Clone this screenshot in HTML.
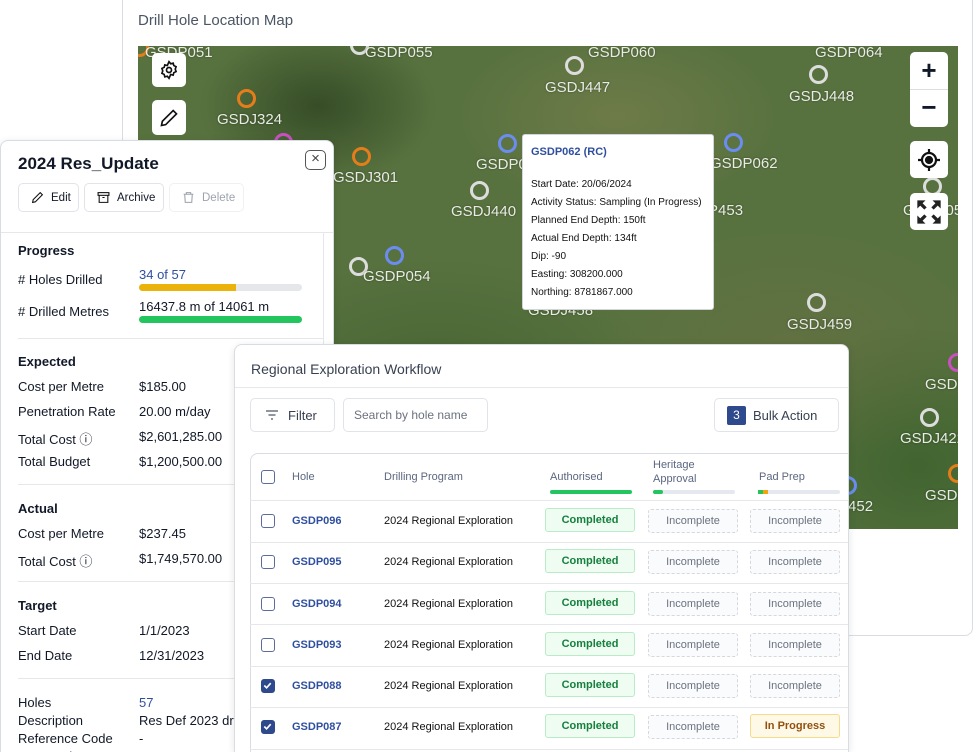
<!DOCTYPE html>
<html style="width:974px;height:752px;overflow:hidden"><head><meta charset="utf-8"><style>
*{box-sizing:border-box;margin:0;padding:0}
body{width:974px;height:752px;overflow:hidden;background:#fff;font-family:"Liberation Sans",sans-serif;position:relative;color:#111827}
.a{position:absolute}
.map{left:138px;top:46px;width:820px;height:483px;overflow:hidden;
background:
radial-gradient(ellipse 120px 80px at 180px 60px,rgba(20,40,15,.5),transparent),
radial-gradient(ellipse 160px 90px at 480px 70px,rgba(150,140,90,.35),transparent),
radial-gradient(ellipse 200px 120px at 650px 300px,rgba(120,110,70,.3),transparent),
radial-gradient(ellipse 180px 140px at 780px 420px,rgba(30,80,25,.4),transparent),
radial-gradient(ellipse 220px 120px at 300px 330px,rgba(40,80,30,.35),transparent),
#58723f}
.mk{position:absolute;width:19px;height:19px;border-radius:50%;border:3px solid #ddd}
.lb{position:absolute;color:#e8ece4;font-size:15px;white-space:nowrap;text-shadow:0 0 2px rgba(0,0,0,.4)}
.ctl{position:absolute;background:#fff;border-radius:5px;display:flex;align-items:center;justify-content:center}
.tip{left:522px;top:134px;width:192px;height:176px;background:#fff;border:1px solid #d1d5db;border-radius:3px;font-size:10px;color:#111}
.tip div{position:absolute;left:8px;white-space:nowrap}
.lp{left:0;top:140px;width:334px;height:612px;background:#fff;border:1px solid #d8dce3;border-bottom:none;border-radius:8px 8px 0 0;box-shadow:0 2px 8px rgba(0,0,0,.12);overflow:hidden}
.lp .t{position:absolute;font-size:13px;white-space:nowrap}
.lp .h{font-weight:bold}
.hr{position:absolute;height:1px;background:#e5e7eb}
.btn{position:absolute;border:1px solid #e0e3e8;border-radius:5px;font-size:11.5px;display:flex;align-items:center;gap:7px;padding-left:12px;background:#fff}
.wp{left:234px;top:344px;width:615px;height:408px;background:#fff;border:1px solid #d8dce3;border-bottom:none;border-radius:8px 8px 0 0;box-shadow:0 2px 8px rgba(0,0,0,.1);overflow:hidden}
.row{position:absolute;left:250px;width:598px;height:1px;background:#e5e7eb}
.cb{position:absolute;left:261px;width:14px;height:14px;border:1.5px solid #5b6b9a;border-radius:3px;background:#fff}
.cb.on{background:#2e4a8c;border-color:#2e4a8c}
.hole{position:absolute;left:292px;font-size:11px;color:#2f4f9e;font-weight:bold}
.prog{position:absolute;left:384px;font-size:11px;color:#111}
.pill{position:absolute;width:90px;height:24px;border-radius:3px;font-size:11px;display:flex;align-items:center;justify-content:center}
.c{left:545px;background:#effcf2;border:1.5px solid #b9ebc6;color:#15803d;font-weight:bold}
.i{border:1.5px dashed #d5d8de;color:#6b7280;background:#fafbfc}
.p{left:750px;background:#fef9e6;border:1.5px solid #f5dc8a;color:#92500e;font-weight:bold}
.th{position:absolute;font-size:11px;color:#5b6680}
</style></head><body>
<div class="a" style="left:122px;top:-10px;width:851px;height:646px;border:1px solid #d8dce3;border-radius:8px"></div>
<div class="a" style="left:138px;top:12px;font-size:15px;color:#4b5563">Drill Hole Location Map</div>
<div class="a map">
 <div class="mk" style="left:-8px;top:-8px;border-color:#e57d1b"></div><div class="lb" style="left:7px;top:-2px">GSDP051</div>
 <div class="mk" style="left:212px;top:-10px"></div><div class="lb" style="left:227px;top:-2px">GSDP055</div>
 <div class="mk" style="left:427px;top:10px"></div><div class="lb" style="left:450px;top:-2px">GSDP060</div><div class="lb" style="left:407px;top:33px">GSDJ447</div>
 <div class="mk" style="left:671px;top:19px"></div><div class="lb" style="left:677px;top:-2px">GSDP064</div><div class="lb" style="left:651px;top:42px">GSDJ448</div>
 <div class="mk" style="left:99px;top:43px;border-color:#e57d1b"></div><div class="lb" style="left:79px;top:65px">GSDJ324</div>
 <div class="mk" style="left:136px;top:87px;border-color:#c850c0"></div>
 <div class="mk" style="left:214px;top:101px;border-color:#e57d1b"></div><div class="lb" style="left:195px;top:123px">GSDJ301</div>
 <div class="mk" style="left:360px;top:88px;border-color:#6b8cf0"></div><div class="lb" style="left:338px;top:110px">GSDP062</div>
 <div class="mk" style="left:332px;top:135px"></div><div class="lb" style="left:313px;top:157px">GSDJ440</div>
 <div class="mk" style="left:586px;top:87px;border-color:#6b8cf0"></div><div class="lb" style="left:572px;top:109px">GSDP062</div>
 <div class="lb" style="left:570px;top:156px">P453</div>
 <div class="mk" style="left:785px;top:131px"></div><div class="lb" style="left:765px;top:156px">GSDP054</div>
 <div class="mk" style="left:247px;top:200px;border-color:#6b8cf0"></div><div class="mk" style="left:211px;top:211px"></div><div class="lb" style="left:225px;top:222px">GSDP054</div>
 <div class="lb" style="left:390px;top:256px">GSDJ458</div>
 <div class="mk" style="left:669px;top:247px"></div><div class="lb" style="left:649px;top:270px">GSDJ459</div>
 <div class="mk" style="left:810px;top:307px;border-color:#c850c0"></div><div class="lb" style="left:787px;top:330px">GSDP0</div>
 <div class="mk" style="left:782px;top:362px"></div><div class="lb" style="left:762px;top:384px">GSDJ422</div>
 <div class="mk" style="left:810px;top:418px;border-color:#e57d1b"></div><div class="lb" style="left:787px;top:441px">GSDP0</div>
 <div class="mk" style="left:700px;top:430px;border-color:#6b8cf0"></div><div class="lb" style="left:700px;top:452px">P452</div>
</div>
<div class="ctl" style="left:152px;top:53px;width:34px;height:34px"><svg width="20" height="20" viewBox="0 0 24 24" fill="none" stroke="#111" stroke-width="2"><circle cx="12" cy="12" r="3"/><path d="M12 2l2 2.5 3-.8.8 3 2.7 1.3-1 2.9 1 3-2.7 1.3-.8 3-3-.8L12 22l-2-2.5-3 .8-.8-3-2.7-1.3 1-3-1-2.9 2.7-1.3.8-3 3 .8z"/></svg></div>
<div class="ctl" style="left:152px;top:100px;width:34px;height:35px"><svg width="20" height="20" viewBox="0 0 24 24" fill="none" stroke="#111" stroke-width="2"><path d="M17 3l4 4L8 20l-5 1 1-5z"/></svg></div>
<div class="ctl" style="left:910px;top:52px;width:38px;height:75px;flex-direction:column"><div style="font-size:26px;font-weight:bold;height:37px;line-height:36px">+</div><div style="width:38px;height:1px;background:#ddd"></div><div style="font-size:26px;font-weight:bold;height:37px;line-height:34px">−</div></div>
<div class="ctl" style="left:910px;top:141px;width:38px;height:37px"><svg width="24" height="24" viewBox="0 0 24 24" fill="none" stroke="#111" stroke-width="2.2"><circle cx="12" cy="12" r="7"/><circle cx="12" cy="12" r="3" fill="#111"/><path d="M12 1v4M12 19v4M1 12h4M19 12h4"/></svg></div>
<div class="ctl" style="left:910px;top:193px;width:38px;height:37px"><svg width="28" height="28" viewBox="0 0 24 24" fill="#222"><path d="M2 2h7l-2.5 2.5 3.5 3.5-2 2-3.5-3.5L2 9zM22 2v7l-2.5-2.5-3.5 3.5-2-2 3.5-3.5L15 2zM2 22v-7l2.5 2.5 3.5-3.5 2 2-3.5 3.5L9 22zM22 22h-7l2.5-2.5-3.5-3.5 2-2 3.5 3.5L22 15z"/></svg></div>
<div class="a tip">
 <div style="top:11px;font-size:11px;font-weight:bold;color:#2f4f9e">GSDP062 (RC)</div>
 <div style="top:44px">Start Date: 20/06/2024</div>
 <div style="top:62px">Activity Status: Sampling (In Progress)</div>
 <div style="top:80px">Planned End Depth: 150ft</div>
 <div style="top:98px">Actual End Depth: 134ft</div>
 <div style="top:116px">Dip: -90</div>
 <div style="top:134px">Easting: 308200.000</div>
 <div style="top:152px">Northing: 8781867.000</div>
</div>
<div class="a lp">
 <div class="t" style="left:17px;top:13px;font-size:17px;font-weight:bold">2024 Res_Update</div>
 <div class="a" style="left:304px;top:9px;width:21px;height:20px;border:1.5px solid #555;border-radius:5px;text-align:center;font-size:15px;line-height:16px;color:#444">×</div>
 <div class="btn" style="left:17px;top:42px;width:61px;height:29px"><svg width="13" height="13" viewBox="0 0 24 24" fill="none" stroke="#111" stroke-width="2"><path d="M17 3l4 4L8 20l-5 1 1-5z"/></svg>Edit</div>
 <div class="btn" style="left:83px;top:42px;width:80px;height:29px"><svg width="13" height="13" viewBox="0 0 24 24" fill="none" stroke="#111" stroke-width="2"><rect x="2" y="3" width="20" height="5"/><path d="M4 8v13h16V8M10 12h4"/></svg>Archive</div>
 <div class="btn" style="left:168px;top:42px;width:75px;height:29px;color:#9ca3af;border-color:#eef0f3"><svg width="13" height="13" viewBox="0 0 24 24" fill="none" stroke="#9ca3af" stroke-width="2"><path d="M3 6h18M8 6V3h8v3M5 6l1 15h12l1-15"/></svg>Delete</div>
 <div class="hr" style="left:0;top:91px;width:334px"></div>
 <div class="a" style="left:322px;top:92px;width:1px;height:560px;background:#e5e7eb"></div>
 <div class="t h" style="left:17px;top:102px">Progress</div>
 <div class="t" style="left:17px;top:131px"># Holes Drilled</div>
 <div class="t" style="left:138px;top:126px;color:#2f4f9e">34 of 57</div>
 <div class="a" style="left:138px;top:143px;width:163px;height:7px;background:#e5e7eb;border-radius:4px"><div style="width:97px;height:7px;background:#ebb20b;border-radius:4px 0 0 4px"></div></div>
 <div class="t" style="left:17px;top:163px"># Drilled Metres</div>
 <div class="t" style="left:138px;top:158px">16437.8 m of 14061 m</div>
 <div class="a" style="left:138px;top:175px;width:163px;height:7px;background:#22c55e;border-radius:4px"></div>
 <div class="hr" style="left:17px;top:197px;width:306px"></div>
 <div class="t h" style="left:17px;top:213px">Expected</div>
 <div class="t" style="left:17px;top:238px">Cost per Metre</div><div class="t" style="left:138px;top:238px">$185.00</div>
 <div class="t" style="left:17px;top:263px">Penetration Rate</div><div class="t" style="left:138px;top:263px">20.00 m/day</div>
 <div class="t" style="left:17px;top:288px">Total Cost ⓘ</div><div class="t" style="left:138px;top:288px">$2,601,285.00</div>
 <div class="t" style="left:17px;top:313px">Total Budget</div><div class="t" style="left:138px;top:313px">$1,200,500.00</div>
 <div class="hr" style="left:17px;top:343px;width:306px"></div>
 <div class="t h" style="left:17px;top:360px">Actual</div>
 <div class="t" style="left:17px;top:385px">Cost per Metre</div><div class="t" style="left:138px;top:385px">$237.45</div>
 <div class="t" style="left:17px;top:410px">Total Cost ⓘ</div><div class="t" style="left:138px;top:410px">$1,749,570.00</div>
 <div class="hr" style="left:17px;top:440px;width:306px"></div>
 <div class="t h" style="left:17px;top:457px">Target</div>
 <div class="t" style="left:17px;top:482px">Start Date</div><div class="t" style="left:138px;top:482px">1/1/2023</div>
 <div class="t" style="left:17px;top:507px">End Date</div><div class="t" style="left:138px;top:507px">12/31/2023</div>
 <div class="hr" style="left:17px;top:537px;width:306px"></div>
 <div class="t" style="left:17px;top:554px">Holes</div><div class="t" style="left:138px;top:554px;color:#2f4f9e">57</div>
 <div class="t" style="left:17px;top:572px">Description</div><div class="t" style="left:138px;top:572px">Res Def 2023 drilling</div>
 <div class="t" style="left:17px;top:590px">Reference Code</div><div class="t" style="left:138px;top:590px">-</div>
 <div class="t" style="left:17px;top:608px">Cost Code</div>
</div>
<div class="a wp">
 <div class="a" style="left:16px;top:16px;font-size:14px;color:#374151">Regional Exploration Workflow</div>
 <div class="hr" style="left:0;top:42px;width:613px"></div>
 <div class="btn" style="left:15px;top:53px;width:85px;height:34px;font-size:13px;color:#374151;gap:9px;padding-left:14px"><svg width="14" height="12" viewBox="0 0 14 12" stroke="#6b7280" stroke-width="1.4"><path d="M1 2h12M3.5 6h7M6 10h2"/></svg>Filter</div>
 <div class="btn" style="left:108px;top:53px;width:145px;height:34px;font-size:12px;color:#6b7280;padding-left:10px">Search by hole name</div>
 <div class="btn" style="left:479px;top:53px;width:125px;height:34px;font-size:13px;color:#374151;padding-left:12px"><span style="background:#2e4a8c;color:#fff;width:19px;height:19px;display:inline-flex;align-items:center;justify-content:center;border-radius:2px;font-size:12px">3</span>Bulk Action</div>
 <div class="a" style="left:15px;top:108px;width:620px;height:400px;border:1px solid #d8dce3;border-radius:8px"></div>
</div>
<div class="cb" style="top:470px"></div>
<div class="th" style="left:292px;top:471px">Hole</div>
<div class="th" style="left:384px;top:471px">Drilling Program</div>
<div class="th" style="left:550px;top:471px">Authorised</div>
<div class="a" style="left:550px;top:490px;width:82px;height:4px;background:#22c55e;border-radius:2px"></div>
<div class="th" style="left:653px;top:458px;line-height:14px">Heritage<br>Approval</div>
<div class="a" style="left:653px;top:490px;width:82px;height:4px;background:#e5e9ef;border-radius:2px"><div style="width:10px;height:4px;background:#22c55e;border-radius:2px"></div></div>
<div class="th" style="left:759px;top:471px">Pad Prep</div>
<div class="a" style="left:758px;top:490px;width:82px;height:4px;background:#e5e9ef;border-radius:2px"><div style="width:5px;height:4px;background:#22c55e;float:left"></div><div style="width:5px;height:4px;background:#f5a30b;float:left"></div></div>
<div class="row" style="top:500px"></div><div class="row" style="top:542px"></div><div class="row" style="top:583px"></div><div class="row" style="top:624px"></div><div class="row" style="top:666px"></div><div class="row" style="top:707px"></div><div class="row" style="top:749px"></div>

<div class="cb" style="top:514px"></div><div class="hole" style="top:515px">GSDP096</div><div class="prog" style="top:515px">2024 Regional Exploration</div><div class="pill c" style="top:508px">Completed</div><div class="pill i" style="left:648px;top:509px">Incomplete</div><div class="pill i" style="left:750px;top:509px">Incomplete</div>
<div class="cb" style="top:555px"></div><div class="hole" style="top:556px">GSDP095</div><div class="prog" style="top:556px">2024 Regional Exploration</div><div class="pill c" style="top:549px">Completed</div><div class="pill i" style="left:648px;top:550px">Incomplete</div><div class="pill i" style="left:750px;top:550px">Incomplete</div>
<div class="cb" style="top:597px"></div><div class="hole" style="top:598px">GSDP094</div><div class="prog" style="top:598px">2024 Regional Exploration</div><div class="pill c" style="top:591px">Completed</div><div class="pill i" style="left:648px;top:592px">Incomplete</div><div class="pill i" style="left:750px;top:592px">Incomplete</div>
<div class="cb" style="top:638px"></div><div class="hole" style="top:639px">GSDP093</div><div class="prog" style="top:639px">2024 Regional Exploration</div><div class="pill c" style="top:632px">Completed</div><div class="pill i" style="left:648px;top:633px">Incomplete</div><div class="pill i" style="left:750px;top:633px">Incomplete</div>
<div class="cb on" style="top:679px"><svg width="11" height="11" viewBox="0 0 12 12" fill="none" stroke="#fff" stroke-width="1.8" style="display:block"><path d="M2.5 6l2.5 2.5 4.5-5"/></svg></div><div class="hole" style="top:680px">GSDP088</div><div class="prog" style="top:680px">2024 Regional Exploration</div><div class="pill c" style="top:673px">Completed</div><div class="pill i" style="left:648px;top:674px">Incomplete</div><div class="pill i" style="left:750px;top:674px">Incomplete</div>
<div class="cb on" style="top:720px"><svg width="11" height="11" viewBox="0 0 12 12" fill="none" stroke="#fff" stroke-width="1.8" style="display:block"><path d="M2.5 6l2.5 2.5 4.5-5"/></svg></div><div class="hole" style="top:721px">GSDP087</div><div class="prog" style="top:721px">2024 Regional Exploration</div><div class="pill c" style="top:714px">Completed</div><div class="pill i" style="left:648px;top:715px">Incomplete</div><div class="pill p" style="top:714px">In Progress</div>
</body></html>
